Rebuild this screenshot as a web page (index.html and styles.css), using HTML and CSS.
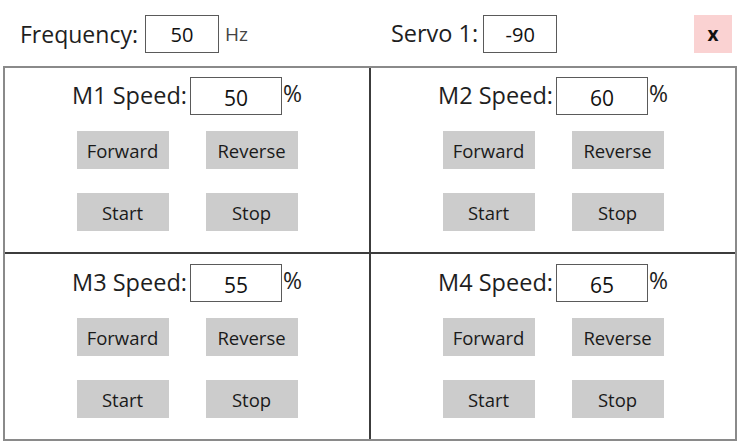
FILE: index.html
```html
<!DOCTYPE html>
<html>
<head>
<meta charset="utf-8">
<link rel="stylesheet" href="styles.css">
</head>
<body>
<div class="top">
  <div class="group freq">
    <span class="lbl">Frequency:</span>
    <div class="box small">50</div>
    <span class="unit">Hz</span>
  </div>
  <div class="group servo">
    <span class="lbl">Servo 1:</span>
    <div class="box small">-90</div>
  </div>
  <div class="close">x</div>
</div>
<div class="grid">
  <div class="panel p1">
    <div class="speed"><span class="lbl">M1 Speed:</span><div class="box">50</div><span class="pct">%</span></div>
    <div class="btns"><div class="btn">Forward</div><div class="btn">Reverse</div></div>
    <div class="btns"><div class="btn">Start</div><div class="btn">Stop</div></div>
  </div>
  <div class="panel p2">
    <div class="speed"><span class="lbl">M2 Speed:</span><div class="box">60</div><span class="pct">%</span></div>
    <div class="btns"><div class="btn">Forward</div><div class="btn">Reverse</div></div>
    <div class="btns"><div class="btn">Start</div><div class="btn">Stop</div></div>
  </div>
  <div class="panel p3">
    <div class="speed"><span class="lbl">M3 Speed:</span><div class="box">55</div><span class="pct">%</span></div>
    <div class="btns"><div class="btn">Forward</div><div class="btn">Reverse</div></div>
    <div class="btns"><div class="btn">Start</div><div class="btn">Stop</div></div>
  </div>
  <div class="panel p4">
    <div class="speed"><span class="lbl">M4 Speed:</span><div class="box">65</div><span class="pct">%</span></div>
    <div class="btns"><div class="btn">Forward</div><div class="btn">Reverse</div></div>
    <div class="btns"><div class="btn">Start</div><div class="btn">Stop</div></div>
  </div>
</div>
</body>
</html>
```
FILE: styles.css
```css
html, body {
  margin: 0;
  padding: 0;
  background: #ffffff;
}
body {
  font-family: "Open Sans", "Noto Sans", sans-serif;
  color: #1e1e1e;
  width: 740px;
  height: 444px;
  overflow: hidden;
}
.top {
  height: 66px;
  display: flex;
  align-items: center;
  padding-left: 20px;
  padding-top: 2px;
  box-sizing: border-box;
}
.group {
  display: flex;
  align-items: center;
}
.lbl {
  font-size: 23px;
  line-height: 1;
}
.freq .box { margin-left: 7px; }
.unit {
  font-size: 19px;
  color: #444;
  margin-left: 6px;
}
.servo { margin-left: 143px; }
.servo .box { margin-left: 5px; }
.servo .lbl { font-size: 23.5px; }
.box {
  width: 92px;
  height: 38px;
  box-sizing: border-box;
  border: 1px solid #5a5a5a;
  display: flex;
  align-items: center;
  justify-content: center;
  font-size: 20px;
  color: #111;
  background: #fff;
  padding-top: 1px;
}
.speed .box { font-size: 21px; padding-top: 3px; }
.box.small { width: 74px; }
.close {
  margin-left: auto;
  margin-right: 8px;
  width: 38px;
  height: 38px;
  background: #fad2d2;
  display: flex;
  align-items: center;
  justify-content: center;
  font-weight: 700;
  font-size: 19px;
  color: #111;
}
.grid {
  margin-left: 3px;
  width: 734px;
  height: 375px;
  box-sizing: border-box;
  border: 2px solid #8a8a8a;
  display: grid;
  grid-template-columns: 366px 1fr;
  grid-template-rows: 186px 1fr;
}
.panel {
  display: flex;
  flex-direction: column;
  align-items: center;
  padding-top: 9px;
  box-sizing: border-box;
}
.p3, .p4 { padding-top: 10px; }
.p1 { border-right: 2px solid #3c3c3c; border-bottom: 2px solid #3c3c3c; }
.p2 { border-bottom: 2px solid #3c3c3c; }
.p3 { border-right: 2px solid #3c3c3c; }
.speed {
  display: flex;
  align-items: center;
  height: 38px;
}
.speed .lbl { font-size: 23.5px; }
.speed .box { margin-left: 3px; }
.pct {
  font-size: 23px;
  margin-left: 1px;
  margin-top: -6px;
}
.btns {
  display: flex;
  gap: 37px;
  margin-top: 16px;
}
.btns + .btns { margin-top: 24px; }
.btn {
  width: 92px;
  height: 38px;
  background: #cccccc;
  display: flex;
  align-items: center;
  justify-content: center;
  font-size: 18.5px;
  color: #1a1a1a;
  padding-top: 1px;
  box-sizing: border-box;
}
```
